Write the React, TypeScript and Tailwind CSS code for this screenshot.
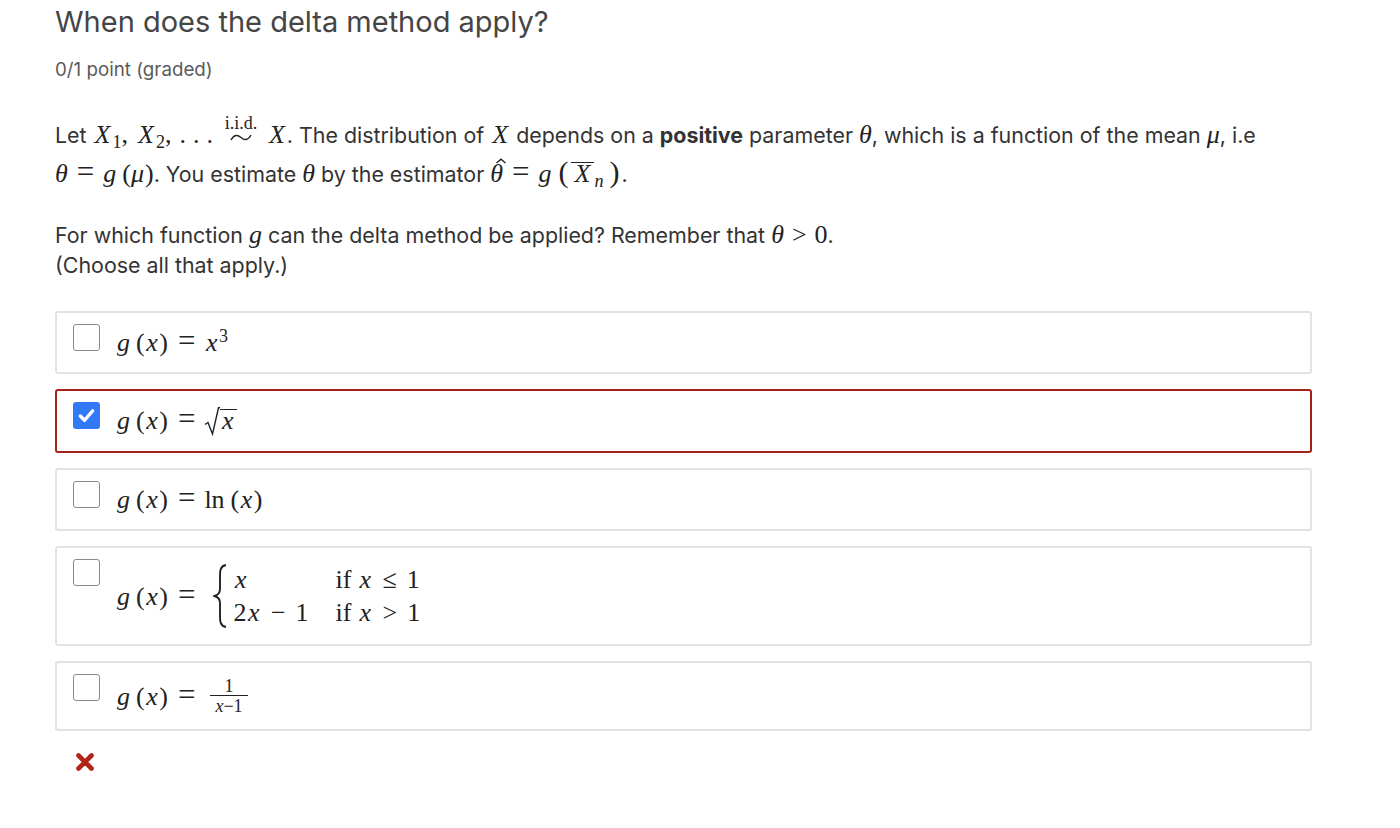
import React from "react";

const V = ({ children }: { children: React.ReactNode }) => (
  <span className="italic">{children}</span>
);

const VX = () => <span className="px-[2px] italic">X</span>;
const Vx = () => <span className="px-[1.5px] italic">x</span>;

const M = ({ children }: { children: React.ReactNode }) => (
  <span className="font-['Liberation_Serif',serif] text-[26px] text-[#222]">{children}</span>
);

const Eq = () => <span className="mx-[9px] text-[31px] leading-none">=</span>;

const GX = () => (
  <>
    <V>g</V>
    <span className="ml-[6px]">(</span>
    <Vx />
    <span className="mr-[1px]">)</span>
    <Eq />
  </>
);

function Checkbox({ checked }: { checked?: boolean }) {
  if (checked) {
    return (
      <span className="flex h-[27px] w-[27px] shrink-0 items-center justify-center rounded-[3px] bg-[#3279f5]">
        <svg width="19" height="19" viewBox="0 0 20 20">
          <path d="M3.5 10.5 L8 15 L16.5 5" fill="none" stroke="white" strokeWidth="3.6" strokeLinecap="round" strokeLinejoin="round" />
        </svg>
      </span>
    );
  }
  return (
    <span className="block h-[27px] w-[27px] shrink-0 rounded-[3px] border-[1.5px] border-[#8a8a8a] bg-white" />
  );
}

function Option({
  checked,
  children,
  h,
}: {
  checked?: boolean;
  children: React.ReactNode;
  h: string;
}) {
  return (
    <div
      className={
        checked
          ? "flex items-start gap-[17px] rounded-[3px] border-2 border-[#a3231a] px-[16px] py-[11px]"
          : "flex items-start gap-[17px] rounded-[3px] border-2 border-[#e2e2e2] px-[16px] py-[11px]"
      }
    >
      <Checkbox checked={checked} />
      <div className={h}>{children}</div>
    </div>
  );
}

const Hat = () => (
  <svg width="12" height="6" viewBox="0 0 12 6" className="absolute left-[5px] top-[-3px]">
    <path d="M1.5 5 L6 1.2 L10.5 5" fill="none" stroke="#222" strokeWidth="1.3" />
  </svg>
);

export default function App() {
  return (
    <div className="min-h-[828px] w-[1400px] bg-white px-[55px] pt-[2px] font-['Inter',sans-serif] text-[#333]">
      <div className="w-[1257px]">
        <h1 className="h-[40px] text-[29px] leading-[40px] font-normal text-[#454545]">
          When does the delta method apply?
        </h1>
        <div className="mt-[16px] text-[18.75px] leading-[24px] text-[#5b5b5b]">0/1 point (graded)</div>

        <div className="mt-[33px] text-[21.4px]">
          <div className="h-[39px] leading-[39px] whitespace-nowrap">
            Let{" "}
            <M>
              <VX />
              <sub className="text-[18px]">1</sub>,<span className="ml-[8px]" />
              <VX />
              <sub className="text-[18px]">2</sub>,<span className="ml-[8px]" />
              <span className="tracking-[7px]">...</span>
              <span className="relative ml-[10px] mr-[15px] inline-block leading-none">
                <span className="absolute left-1/2 top-[-8px] -translate-x-1/2 text-[18px] leading-none">i.i.d.</span>
                <svg width="22" height="9" viewBox="0 0 22 9" className="inline-block align-[1px]">
                  <path d="M1 7 C4 1.5 7.5 1.5 11 4.5 C14.5 7.5 18 7.5 21 2" fill="none" stroke="#222" strokeWidth="1.4" />
                </svg>
              </span>
              <VX />
            </M>
            . The distribution of{" "}
            <M>
              <VX />
            </M>{" "}
            depends on a <b className="font-bold">positive</b> parameter{" "}
            <M>
              <V>θ</V>
            </M>
            , which is a function of the mean{" "}
            <M>
              <V>μ</V>
            </M>
            , i.e
          </div>
          <div className="h-[39px] leading-[39px] whitespace-nowrap">
            <M>
              <V>θ</V>
              <Eq />
              <V>g</V>
              <span className="ml-[6px]">(</span>
              <V>μ</V>
              <span className="ml-[1px]">)</span>
            </M>
            . You estimate{" "}
            <M>
              <V>θ</V>
            </M>{" "}
            by the estimator{" "}
            <M>
              <span className="relative inline-block leading-none">
                <Hat />
                <V>θ</V>
              </span>
              <Eq />
              <V>g</V>
              <span className="ml-[7px] text-[30px] leading-none">(</span>
              <span className="ml-[2px] inline-block border-t-[1.5px] border-[#222] px-[2px] leading-[22px]">
                <VX />
              </span>
              <sub className="pr-[6px] text-[18px]">
                <V>n</V>
              </sub>
              <span className="text-[30px] leading-none">)</span>
            </M>
            <span className="ml-[2px]">.</span>
          </div>
        </div>

        <div className="mt-[27px] text-[21.4px] leading-[30px]">
          <div className="whitespace-nowrap">
            For which function{" "}
            <M>
              <V>g</V>
            </M>{" "}
            can the delta method be applied? Remember that{" "}
            <M>
              <V>θ</V>
              <span className="mx-[8px]">&gt;</span>0
            </M>
            .
          </div>
          <div>(Choose all that apply.)</div>
        </div>

        <div className="mt-[31px] flex flex-col gap-[15px]">
          <Option h="h-[37px] leading-[37px]">
            <M>
              <GX />
              <Vx />
              <sup className="text-[18px]">3</sup>
            </M>
          </Option>
          <Option checked h="h-[38px] leading-[38px]">
            <M>
              <GX />
              <svg width="16" height="29" viewBox="0 0 16 29" className="inline-block align-[-7px]">
                <path d="M1 17.5 L4 15.5 L8.5 27 L14.5 0.8 L16 0.8" fill="none" stroke="#222" strokeWidth="1.4" strokeLinejoin="miter" />
              </svg>
              <span className="inline-block border-t-[1.4px] border-[#222] pr-[2px] leading-[22px]">
                <Vx />
              </span>
            </M>
          </Option>
          <Option h="h-[37px] leading-[37px]">
            <M>
              <GX />
              ln<span className="ml-[6px]">(</span>
              <Vx />)
            </M>
          </Option>
          <Option h="h-[74px]">
            <div className="flex h-[74px] items-center">
              <M>
                <GX />
              </M>
              <svg width="15" height="66" viewBox="0 0 15 66" className="ml-[9px] mr-[5px]">
                <path
                  d="M13 2 C7 3 7 8 7 14 L7 26 C7 30 5 32 1.5 33 C5 34 7 36 7 40 L7 52 C7 58 7 63 13 64"
                  fill="none"
                  stroke="#222"
                  strokeWidth="1.9"
                />
              </svg>
              <div className="grid grid-cols-[auto_auto] gap-x-[27px] font-['Liberation_Serif',serif] text-[26px] leading-[33px] text-[#222]">
                <span>
                  <Vx />
                </span>
                <span>
                  if <Vx />
                  <span className="mx-[10px]">≤</span>1
                </span>
                <span>
                  2<Vx />
                  <span className="mx-[10px]">−</span>1
                </span>
                <span>
                  if <Vx />
                  <span className="mx-[10px]">&gt;</span>1
                </span>
              </div>
            </div>
          </Option>
          <Option h="h-[44px]">
            <div className="flex h-[44px] items-center">
              <M>
                <GX />
              </M>
              <span className="ml-[6px] inline-flex flex-col items-center font-['Liberation_Serif',serif] text-[18px] leading-[18px] text-[#222]">
                <span className="px-[4px]">1</span>
                <span className="border-t-[1.3px] border-[#222] px-[5px] pt-[1px]">
                  <V>x</V>−1
                </span>
              </span>
            </div>
          </Option>
        </div>

        <div className="mt-[21px] pl-[20px]">
          <svg width="20" height="20" viewBox="0 0 20 20">
            <path d="M3.5 3.5 L16.5 16.5 M16.5 3.5 L3.5 16.5" stroke="#b0251a" strokeWidth="4.6" strokeLinecap="round" />
          </svg>
        </div>
      </div>
    </div>
  );
}
